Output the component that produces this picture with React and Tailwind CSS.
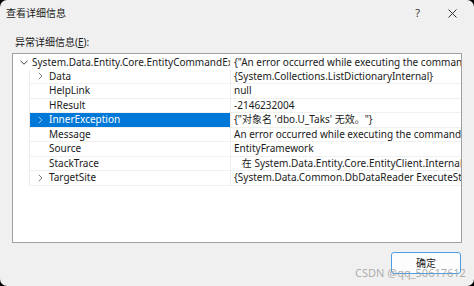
import React from 'react';

const rows = [
  { name: 'Data', value: '{System.Collections.ListDictionaryInternal}', expand: true },
  { name: 'HelpLink', value: 'null' },
  { name: 'HResult', value: '-2146232004' },
  { name: 'InnerException', value: '{"对象名 \'dbo.U_Taks\' 无效。"}', expand: true, selected: true },
  { name: 'Message', value: 'An error occurred while executing the command definition. See the inner exception for details.' },
  { name: 'Source', value: 'EntityFramework' },
  { name: 'StackTrace', value: '   在 System.Data.Entity.Core.EntityClient.Internal.EntityCommandDefinition.ExecuteStoreCommands' },
  { name: 'TargetSite', value: '{System.Data.Common.DbDataReader ExecuteStoreCommands}', expand: true },
];

function Chevron({ light }) {
  return (
    <svg width="5" height="8" viewBox="0 0 5 8" className="shrink-0">
      <polyline points="0.8,0.8 4,4 0.8,7.2" fill="none" stroke={light ? '#9cc8f0' : '#7a7a7a'} strokeWidth="1" />
    </svg>
  );
}

export default function App() {
  const font = { fontFamily: '"Noto Sans", "Noto Sans CJK SC", sans-serif' };

  return (
    <div className="w-[474px] h-[286px] bg-black overflow-hidden" style={font}>
      <div className="relative w-full h-full bg-[#f0f0f0] rounded-[7px] flex flex-col text-[#1a1a1a]">
        {/* title bar */}
        <div className="h-[26px] flex items-center pl-[6px] pr-[17px] text-[10px]">
          <span className="flex-1">查看详细信息</span>
          <span className="mr-[28px] text-[11px] text-[#333]">?</span>
          <svg width="9" height="9" viewBox="0 0 9 9">
            <path d="M0.5 0.5 L8.5 8.5 M8.5 0.5 L0.5 8.5" stroke="#333" strokeWidth="1" />
          </svg>
        </div>

        <div className="mt-[8px] pl-[15px] h-[16px] flex items-center text-[10px]">
          异常详细信息(<span className="underline">E</span>):
        </div>

        {/* tree box */}
        <div className="mt-[3px] ml-[12px] w-[450px] h-[190px] bg-white border border-[#a0a0a0] pt-[1px] text-[10px] overflow-hidden">
          <div className="h-[14.5px] flex items-center">
            <div className="w-[217px] flex items-center shrink-0 overflow-hidden">
              <svg width="8" height="5" viewBox="0 0 8 5" className="ml-[7px] mr-[4px] shrink-0">
                <polyline points="0.5,0.8 4,4.2 7.5,0.8" fill="none" stroke="#444" strokeWidth="1" />
              </svg>
              <span className="whitespace-nowrap">System.Data.Entity.Core.EntityCommandExecutionException</span>
            </div>
            <div className="flex-1 pl-[3px] whitespace-nowrap overflow-hidden border-l border-[#f0f0f0]">
              {'{"An error occurred while executing the command definition. See the inner exception for details."}'}
            </div>
          </div>

          <div className="ml-[16px] border-l border-[#ececec]">
            {rows.map((r) => (
              <div key={r.name} className="h-[14.5px] flex items-stretch border-b border-[#f0f0f0]">
                <div
                  className={
                    r.selected
                      ? 'w-[200px] shrink-0 flex items-center bg-[#0078d7] text-white'
                      : 'w-[200px] shrink-0 flex items-center'
                  }
                >
                  <div className="w-[19px] flex justify-center pl-[1px]">
                    {r.expand && <Chevron light={r.selected} />}
                  </div>
                  <span className="whitespace-nowrap">{r.name}</span>
                </div>
                <div className="flex-1 flex items-center pl-[3px] whitespace-pre overflow-hidden border-l border-[#ececec]">
                  {r.value}
                </div>
              </div>
            ))}
          </div>
        </div>

        {/* button */}
        <div className="mt-[9px] self-end mr-[13px] w-[70px] h-[22px] border border-[#4a9ee6] rounded-[3px] bg-[#fdfdfd] flex items-center justify-center text-[10px]">
          确定
        </div>

        {/* watermark */}
        <div className="absolute left-[355px] top-[265px] text-[11px] text-[#9a9a9a]/80 whitespace-nowrap">
          CSDN @qq_50617612
        </div>
      </div>
    </div>
  );
}
